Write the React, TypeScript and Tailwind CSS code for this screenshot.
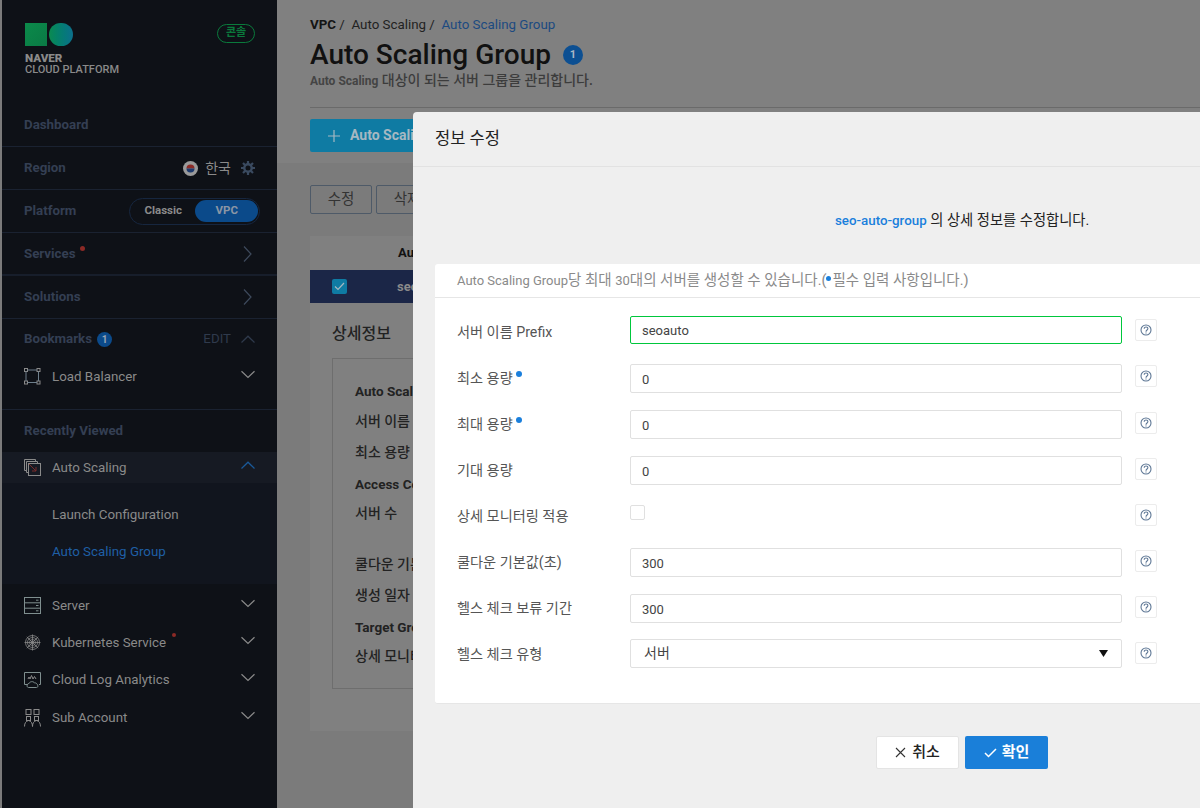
import React from "react";

const Chevron = ({ dir, cls }: { dir: "up" | "down" | "right"; cls: string }) => {
  const d = dir === "up" ? "M.5 7.5L7 1.2L13.5 7.5" : dir === "down" ? "M.5 1.2L7 7.5L13.5 1.2" : "M1 .5L8 8L1 15.5";
  const w = dir === "right" ? 9 : 14;
  const h = dir === "right" ? 16 : 9;
  return (
    <svg width={w} height={h} viewBox={`0 0 ${w} ${h}`} fill="none" className={cls}>
      <path d={d} stroke="currentColor" strokeWidth="1.2" />
    </svg>
  );
};

const IconLB = () => (
  <svg width="17" height="17" viewBox="0 0 17 17" fill="none" stroke="#8a8a8a" strokeWidth="1">
    <rect x=".5" y=".5" width="3" height="3" />
    <rect x="13" y=".5" width="3" height="3" />
    <rect x=".5" y="13" width="3" height="3" />
    <rect x="13" y="13" width="3" height="3" />
    <path d="M3.5 2H13M3.5 14.5H13M2 3.5V13M14.5 3.5V13" stroke="#6e7f8c" />
  </svg>
);
const IconAS = () => (
  <svg width="17" height="17" viewBox="0 0 17 17" fill="none" stroke="#8a8a8a" strokeWidth="1">
    <path d="M2.5 11.5H.5V.5H11.5V2.5" />
    <path d="M4.5 13.5H2.5V2.5H13.5V4.5" />
    <rect x="4.5" y="4.5" width="12" height="12" />
    <path d="M5 5L12 12M12 8V12H8" stroke="#7a2b2b" />
  </svg>
);
const IconServer = () => (
  <svg width="17" height="17" viewBox="0 0 17 17" fill="none" stroke="#7f8f8f" strokeWidth="1">
    <rect x=".5" y=".5" width="16" height="16" />
    <path d="M.5 5.8H16.5M.5 11.2H16.5" />
    <path d="M12 3.2H14.5M12 8.5H14.5M12 13.8H14.5" />
  </svg>
);
const IconK8s = () => (
  <svg width="17" height="17" viewBox="0 0 17 17" fill="none" stroke="#8a8a8a" strokeWidth=".8">
    <circle cx="8.5" cy="8.5" r="7" />
    <circle cx="8.5" cy="8.5" r="5" />
    <circle cx="8.5" cy="8.5" r="3" />
    <circle cx="8.5" cy="8.5" r="1.2" />
    <path d="M8.5 .5V16.5M.5 8.5H16.5M2.8 2.8L14.2 14.2M14.2 2.8L2.8 14.2" />
  </svg>
);
const IconLog = () => (
  <svg width="17" height="16" viewBox="0 0 17 16" fill="none" stroke="#7f8f8f" strokeWidth="1">
    <path d="M3.5 12.5H.5V.5H16.5V12.5H15" />
    <path d="M4.5 15.5C2.5 15.5 2.5 11.5 5 11.5C5.5 9.5 9.5 8.8 10.5 11C13 10 15.5 15.5 12.5 15.5Z" />
    <path d="M4 7L5 5L6 7L7.5 3.5L9 7L10.5 4.5L12 7" stroke="#8a8a8a" />
  </svg>
);
const IconSub = () => (
  <svg width="17" height="18" viewBox="0 0 17 18" fill="none" stroke="#8a8a8a" strokeWidth="1">
    <rect x="2" y=".5" width="5" height="5" />
    <rect x="10" y=".5" width="5" height="5" />
    <rect x="2.5" y="7.5" width="4" height="4" />
    <rect x="10.5" y="7.5" width="4" height="4" />
    <path d="M.5 17.5C.5 14 2 12 4.5 11.5C7 12 8.5 14 8.5 17.5C8.5 14 10 12 12.5 11.5C15 12 16.5 14 16.5 17.5" />
  </svg>
);

const Help = ({ cls = "-mt-[2px]" }: { cls?: string }) => (
  <div className={`w-[22px] h-[22px] shrink-0 ml-[13px] rounded-[2px] border border-[#ececec] bg-white flex items-center justify-center ${cls}`}>
    <svg width="12" height="12" viewBox="0 0 12 12" fill="none" stroke="#5f7896" strokeWidth="1.1">
      <circle cx="6" cy="6" r="5" />
      <path d="M4.2 4.7C4.2 2.4 7.9 2.5 7.9 4.6C7.9 6 6 6 6 7.7M6 8.6V9.6" />
    </svg>
  </div>
);

const SideHead = ({ children, right, thick = false }: { children: React.ReactNode; right?: React.ReactNode; thick?: boolean }) => (
  <div className={`h-[43px] pl-[22px] pr-[22px] flex items-center justify-between ${thick ? "border-b-2 border-[#171e2b]" : "border-b border-[#1a2231]"}`}>
    <span className="text-[13.3px] font-bold text-[#343f53]">{children}</span>
    {right}
  </div>
);

const NavItem = ({ icon, label, dot, cls = "" }: { icon: React.ReactNode; label: string; dot?: boolean; cls?: string }) => (
  <div className={`h-[37px] pl-[22px] pr-[22px] flex items-center ${cls}`}>
    <span className="w-[17px] flex justify-center">{icon}</span>
    <span className="ml-[11px] text-[13.33px] text-[#8a8a8a] relative">
      {label}
      {dot && <span className="absolute -right-[10px] top-0 w-[4px] h-[4px] rounded-full bg-[#8c2a26]" />}
    </span>
    <Chevron dir="down" cls="ml-auto -mt-[5px] text-[#8a8a8a]" />
  </div>
);

const Field = ({ label, req, value, focus, box = "h-[29px] pt-[4px]", help }: { label: string; req?: boolean; value: string; focus?: boolean; box?: string; help?: string }) => (
  <div className="h-[46px] flex items-center">
    <div className="w-[195px] pl-[22px] pt-[2px] text-[14.2px] text-[#555] relative">
      <span className="relative">
        {label}
        {req && <span className="absolute -right-[9px] top-[1px] w-[6px] h-[6px] rounded-full bg-[#1a7fdc]" />}
      </span>
    </div>
    <div className={`w-[492px] flex items-center px-[11px] rounded-[2px] bg-white text-[13px] text-[#444] ${box} ${focus ? "border border-[#00c73c]" : "border border-[#e0e0e0]"}`}>
      {value}
    </div>
    <Help cls={help} />
  </div>
);

export default function App() {
  return (
    <div
      className="relative w-[1200px] h-[808px] overflow-hidden flex bg-[#7b7b7b] text-[13px]"
      style={{ fontFamily: 'Roboto, "Noto Sans CJK KR", sans-serif' }}
    >
      {/* Sidebar */}
      <aside className="ml-[2px] w-[275px] shrink-0 bg-[#0e1117] flex flex-col">
        <div className="h-[104px] pl-[23px] pr-[22px] pt-[23px] flex items-start justify-between">
          <div>
            <div className="flex items-center gap-[2px]">
              <div className="w-[22px] h-[23px] bg-gradient-to-br from-[#0b8a4a] to-[#0a7a45]" />
              <div className="w-[24px] h-[23px] rounded-full bg-gradient-to-r from-[#0b8a4f] to-[#0d6f8c]" />
            </div>
            <div className="mt-[7px] text-[11.6px] leading-[11px] font-black text-[#8a8a8a]">NAVER</div>
            <div className="text-[11px] leading-[11px] font-medium text-[#8a8a8a]">CLOUD PLATFORM</div>
          </div>
          <div className="mt-[1px] w-[38px] h-[19px] rounded-full border border-[#0a7a3c] text-[#0a7a3c] text-[11px] font-bold flex items-center justify-center">
            콘솔
          </div>
        </div>
        <SideHead>Dashboard</SideHead>
        <SideHead
          right={
            <div className="flex items-center">
              <svg width="15" height="15" viewBox="0 0 15 15" className="mr-[7px]">
                <circle cx="7.5" cy="7.5" r="7.5" fill="#9a9a9a" />
                <path d="M3.5 7.5A4 4 0 0 1 11.5 7.5Z" fill="#8c2a26" />
                <path d="M3.5 7.5A4 4 0 0 0 11.5 7.5Z" fill="#1d3a6e" />
              </svg>
              <span className="text-[14px] text-[#8a8a8a] mr-[10px]">한국</span>
              <svg width="14" height="14" viewBox="0 0 14 14" fill="none" stroke="#3a4a60">
                <circle cx="7" cy="7" r="3.7" strokeWidth="2.4" />
                <path d="M7 0V3M7 11V14M0 7H3M11 7H14M2 2L4 4M10 10L12 12M12 2L10 4M4 10L2 12" strokeWidth="2.2" />
              </svg>
            </div>
          }
        >
          Region
        </SideHead>
        <SideHead
          right={
            <div className="w-[131px] h-[27px] -mr-[5px] rounded-full border border-[#16263f] flex items-center p-[1px]">
              <span className="w-[65px] text-center text-[11.5px] font-bold text-[#8a8a8a]">Classic</span>
              <span className="w-[63px] h-[22px] rounded-full bg-[#0b4a8a] text-[11.5px] font-bold text-[#8a96a5] flex items-center justify-center">VPC</span>
            </div>
          }
        >
          Platform
        </SideHead>
        <SideHead thick right={<Chevron dir="right" cls="text-[#3e4a5c] mr-[3px]" />}>
          <span className="relative">
            Services
            <span className="absolute -right-[9px] top-0 w-[5px] h-[5px] rounded-full bg-[#8c2a26]" />
          </span>
        </SideHead>
        <SideHead right={<Chevron dir="right" cls="text-[#3e4a5c] mr-[3px]" />}>Solutions</SideHead>

        <div className="h-[42px] pl-[22px] pr-[22px] pb-[2px] flex items-center">
          <span className="text-[13.3px] font-bold text-[#343f53]">Bookmarks</span>
          <span className="ml-[5px] w-[15px] h-[15px] rounded-full bg-[#0b4a8a] text-[10px] font-bold text-[#9aa5b5] flex items-center justify-center">1</span>
          <span className="ml-auto text-[13.3px] text-[#2f3a4c]">EDIT</span>
          <Chevron dir="up" cls="ml-[10px] text-[#2f3a4c]" />
        </div>
        <div className="h-[49px] border-b border-[#1a2231]">
          <NavItem icon={<IconLB />} label="Load Balancer" cls="-mt-[3px]" />
        </div>
        <div className="h-[42px] pl-[22px] flex items-center text-[13.3px] font-bold text-[#343f53]">Recently Viewed</div>
        <div className="h-[31px] pl-[22px] pr-[22px] flex items-center bg-[#161a23]">
          <IconAS />
          <span className="ml-[11px] text-[13.33px] text-[#8a8a8a]">Auto Scaling</span>
          <Chevron dir="up" cls="ml-auto -mt-[5px] text-[#1a5a9a]" />
        </div>
        <div className="h-[101px] bg-[#11151e] pl-[50px] pt-[13px]">
          <div className="h-[37px] flex items-center text-[13.33px] text-[#8a8a8a]">Launch Configuration</div>
          <div className="h-[37px] flex items-center text-[13.33px] text-[#1f5fa5]">Auto Scaling Group</div>
        </div>
        <div className="pt-[3px]">
          <NavItem icon={<IconServer />} label="Server" />
          <NavItem icon={<IconK8s />} label="Kubernetes Service" dot />
          <NavItem icon={<IconLog />} label="Cloud Log Analytics" />
          <NavItem icon={<IconSub />} label="Sub Account" cls="mt-[1px]" />
        </div>
      </aside>

      {/* Main behind the overlay */}
      <main className="flex-1 min-w-0 flex flex-col">
        <header className="h-[163px] bg-[#808080] pl-[33px] pt-[16px]">
          <div className="text-[13.33px] leading-[18px] text-[#222]">
            <span className="font-bold text-[#141414]">VPC</span> /&nbsp; Auto Scaling /&nbsp; <span className="text-[#1c4a80]">Auto Scaling Group</span>
          </div>
          <div className="mt-[4px] flex items-center h-[34px]">
            <span className="text-[28px] font-medium text-[#111]">Auto Scaling Group</span>
            <span className="ml-[12px] w-[20px] h-[20px] rounded-full bg-[#0c4f92] text-[11px] font-bold text-[#a9b6c6] flex items-center justify-center">1</span>
          </div>
          <div className="text-[14px] leading-[16px] font-medium text-[#3c3c3c]">
            <span className="font-bold text-[12px] text-[#444]">Auto Scaling</span> 대상이 되는 서버 그룹을 관리합니다.
          </div>
          <div className="mt-[18px] h-px bg-[#6a6a6a]" />
          <div className="mt-[11px] w-[140px] h-[33px] rounded-[2px] bg-[#0f7ba3] flex items-center pl-[18px] text-[#a6b8c2]">
            <svg width="12" height="12" viewBox="0 0 12 12" fill="none" stroke="#a6b8c2" strokeWidth="1.2"><path d="M6 0V12M0 6H12" /></svg>
            <span className="ml-[10px] text-[14px] font-bold whitespace-nowrap">Auto Scaling</span>
          </div>
        </header>
        <div className="flex-1 pl-[33px] pt-[22px]">
          <div className="flex gap-[4px]">
            <div className="w-[62px] h-[29px] rounded-[2px] border border-[#4e5a68] text-[14.5px] text-[#333] flex items-center justify-center">수정</div>
            <div className="w-[62px] h-[29px] rounded-[2px] border border-[#4e5a68] text-[14.5px] text-[#333] flex items-center justify-center">삭제</div>
          </div>
          <div className="mt-[22px] h-[34px] bg-[#808080] flex items-center pl-[88px] font-bold text-[13px] text-[#111]">Auto</div>
          <div className="h-[33px] bg-[#1b2647] flex items-center pl-[22px]">
            <span className="w-[15px] h-[15px] rounded-[2px] bg-[#0f7ba3] flex items-center justify-center">
              <svg width="11" height="9" viewBox="0 0 11 9" fill="none" stroke="#a6b8c2" strokeWidth="1.2"><path d="M1 4.5L4 7.5L10 1" /></svg>
            </span>
            <span className="ml-[50px] font-bold text-[13px] text-[#8a8a8a]">seo</span>
          </div>
          <div className="h-[428px] bg-[#808080] pl-[22px] pt-[20px]">
            <div className="text-[16px] leading-[22px] font-medium text-[#222]">상세정보</div>
            <div className="mt-[13px] h-[331px] border border-[#6e6e6e] pl-[22px] pt-[22px] text-[14px] leading-[20px] font-medium text-[#222]">
              <div className="h-[30px] text-[13.5px] font-bold">Auto Scaling</div>
              <div className="h-[31px]">서버 이름</div>
              <div className="h-[32px]">최소 용량</div>
              <div className="h-[29px] text-[13.5px] font-bold">Access Control</div>
              <div className="h-[51px]">서버 수</div>
              <div className="h-[31px]">쿨다운 기본값</div>
              <div className="h-[32px]">생성 일자</div>
              <div className="h-[29px] text-[13.5px] font-bold">Target Group</div>
              <div>상세 모니터링</div>
            </div>
          </div>
        </div>
      </main>

      {/* Modal */}
      <section className="absolute left-[413px] top-[112px] right-0 bottom-0 bg-[#efefef] rounded-tl-[4px] flex flex-col">
        <div className="h-[55px] shrink-0 border-b border-[#e2e2e2] pl-[22px] flex items-center text-[16.5px] text-[#222]">정보 수정</div>
        <div className="h-[97px] shrink-0 pl-[422px] pt-[43px] text-[14.3px] leading-[20px] text-[#222]">
          <span className="text-[13.33px] font-medium text-[#1a7fdc]">seo-auto-group</span> 의 상세 정보를 수정합니다.
        </div>
        <div className="ml-[22px] h-[440px] shrink-0 bg-white rounded-tl-[3px] rounded-bl-[3px] border-b border-[#e6e6e6]">
          <div className="h-[34px] border-b border-[#e6e6e6] pl-[22px] flex items-center text-[14.5px] text-[#8a8a8a]">
            <span className="text-[13px]">Auto Scaling Group</span>당 최대&nbsp;<span className="text-[13px]">30</span>대의 서버를 생성할 수 있습니다.(
            <span className="w-[5px] h-[5px] rounded-full bg-[#1a7fdc] -mt-[5px] mr-[1px]" />
            필수 입력 사항입니다.)
          </div>
          <div className="pt-[11px]">
            <Field label="서버 이름 Prefix" value="seoauto" focus box="h-[28px] pt-[2px] -mt-[4px]" help="-mt-[4px]" />
            <Field label="최소 용량" req value="0" help="-mt-[4px]" />
            <Field label="최대 용량" req value="0" />
            <Field label="기대 용량" value="0" />
            <div className="h-[46px] flex items-center">
              <div className="w-[195px] pl-[22px] pt-[2px] text-[14.2px] text-[#555]">상세 모니터링 적용</div>
              <div className="w-[492px] -mt-[8px]">
                <div className="w-[15px] h-[15px] rounded-[2px] border border-[#e0e0e0]" />
              </div>
              <Help />
            </div>
            <Field label="쿨다운 기본값(초)" value="300" box="h-[29px] pt-[2px] mt-[1px]" />
            <Field label="헬스 체크 보류 기간" value="300" box="h-[29px] pt-[2px] mt-[1px]" />
            <div className="h-[46px] flex items-center">
              <div className="w-[195px] pl-[22px] pt-[2px] text-[14.2px] text-[#555]">헬스 체크 유형</div>
              <div className="w-[492px] h-[29px] -mt-[2px] flex items-center justify-between pl-[13px] pr-[13px] rounded-[2px] bg-white border border-[#e0e0e0] text-[14px] text-[#444]">
                서버
                <svg width="9" height="7" viewBox="0 0 9 7"><path d="M0 0H9L4.5 7Z" fill="#111" /></svg>
              </div>
              <Help />
            </div>
          </div>
        </div>
        <div className="mt-[32px] ml-[463px] flex gap-[6px]">
          <div className="w-[83px] h-[33px] rounded-[2px] bg-white border border-[#e4e4e4] flex items-center justify-center text-[15px] font-medium text-[#222]">
            <svg width="11" height="11" viewBox="0 0 11 11" fill="none" stroke="#333" strokeWidth="1.1" className="mr-[6px]"><path d="M1 1L10 10M10 1L1 10" /></svg>
            취소
          </div>
          <div className="w-[83px] h-[33px] rounded-[2px] bg-[#1a7fd9] flex items-center justify-center text-[15px] font-bold text-white">
            <svg width="13" height="10" viewBox="0 0 13 10" fill="none" stroke="#fff" strokeWidth="1.5" className="mr-[5px]"><path d="M1 5L4.5 8.5L12 1" /></svg>
            확인
          </div>
        </div>
      </section>
    </div>
  );
}
